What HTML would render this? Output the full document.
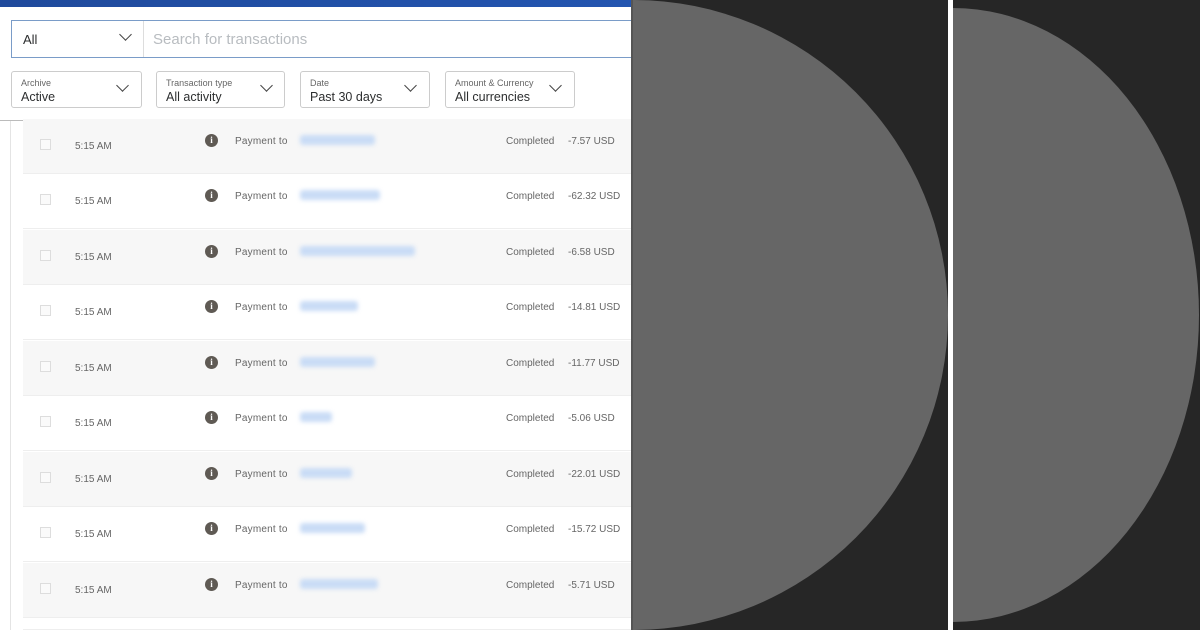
<!DOCTYPE html>
<html><head><style>
*{margin:0;padding:0;box-sizing:border-box}
body{width:1200px;height:630px;overflow:hidden;background:#262626;font-family:"Liberation Sans",sans-serif;position:relative}
#left{position:absolute;left:0;top:0;width:631px;height:630px;background:#fff;overflow:hidden}
.bar{position:absolute;left:0;top:0;width:631px;height:7px;background:linear-gradient(90deg,#1f4a9c,#2355b0)}
.search{position:absolute;left:11px;top:20px;width:630px;height:38px;border:1px solid #7a9cc8;background:#fff}
.search .all{position:absolute;left:11px;top:11px;font-size:13px;color:#2c2e2f}
.search .sep{position:absolute;left:131px;top:0;width:1px;height:36px;background:#ddd}
.search .ph{position:absolute;left:141px;top:10px;font-size:15px;color:#b8bcc0}
.chev{position:absolute;width:9px;height:9px;border-right:1.5px solid #444;border-bottom:1.5px solid #444;transform:rotate(45deg)}
.f{position:absolute;top:71px;height:37px;border:1px solid #ccc;border-radius:3px;background:#fff}
.f .l{position:absolute;left:9px;top:6px;font-size:9px;color:#666}
.f .v{position:absolute;left:9px;top:18px;font-size:12.5px;color:#2c2e2f}
.hr{position:absolute;left:0;top:120px;width:631px;height:1px;background:#bbb}
.gut{position:absolute;left:10px;top:121px;width:1px;height:510px;background:#e4e4e4}
.row{position:absolute;left:23px;width:608px;height:55px;border-bottom:1px solid #eee}
.row.g{background:#f7f7f7}
.cb{position:absolute;left:17px;top:20px;width:11px;height:11px;border:1px solid #ddd;background:#fafafa}
.t{position:absolute;left:52px;top:22px;font-size:10px;color:#666}
.i{position:absolute;left:182px;top:15px;width:13px;height:13px;border-radius:50%;background:#5f5a54;color:#fff;font-size:9px;font-weight:bold;text-align:center;line-height:13px;font-family:"Liberation Serif",serif}
.p{position:absolute;left:212px;top:17px;font-size:10px;color:#666;letter-spacing:.2px}
.n{position:absolute;left:277px;top:16px;height:10px;background:#c9dcf6;filter:blur(2px);border-radius:3px}
.s{position:absolute;left:483px;top:17px;font-size:10px;color:#666}
.a{position:absolute;left:545px;top:17px;font-size:10px;color:#666}
.pan{position:absolute;top:0;height:630px;overflow:hidden;background:#262626}
.e1{position:absolute;left:-315px;top:0;width:630px;height:630px;border-radius:50%;background:#666}
.e2{position:absolute;left:-246px;top:8px;width:492px;height:614px;border-radius:50%;background:#666}
.w{position:absolute;left:948px;top:0;width:5px;height:630px;background:#fff}
.strip{position:absolute;left:631px;top:0;width:2px;height:630px;background:#555}
</style></head><body>
<div class="pan" style="left:633px;width:315px"><div class="e1"></div></div>
<div class="w"></div>
<div class="pan" style="left:953px;width:247px"><div class="e2"></div></div>
<div class="strip"></div>
<div id="left">
<div class="bar"></div>
<div class="search"><span class="all">All</span><div class="chev" style="left:109px;top:9px"></div><div class="sep"></div><span class="ph">Search for transactions</span></div>
<div class="f" style="left:11px;width:131px"><span class="l">Archive</span><span class="v">Active</span><div class="chev" style="left:106px;top:9px"></div></div>
<div class="f" style="left:156px;width:129px"><span class="l">Transaction type</span><span class="v">All activity</span><div class="chev" style="left:105px;top:9px"></div></div>
<div class="f" style="left:300px;width:130px"><span class="l">Date</span><span class="v">Past 30 days</span><div class="chev" style="left:105px;top:9px"></div></div>
<div class="f" style="left:445px;width:130px"><span class="l">Amount &amp; Currency</span><span class="v">All currencies</span><div class="chev" style="left:105px;top:9px"></div></div>
<div class="hr"></div>
<div class="gut"></div>

<div class="row g" style="top:119px"><div class="cb"></div><span class="t">5:15 AM</span><span class="i">i</span><span class="p">Payment to</span><div class="n" style="width:75px"></div><span class="s">Completed</span><span class="a">-7.57 USD</span></div>
<div class="row" style="top:174px"><div class="cb"></div><span class="t">5:15 AM</span><span class="i">i</span><span class="p">Payment to</span><div class="n" style="width:80px"></div><span class="s">Completed</span><span class="a">-62.32 USD</span></div>
<div class="row g" style="top:230px"><div class="cb"></div><span class="t">5:15 AM</span><span class="i">i</span><span class="p">Payment to</span><div class="n" style="width:115px"></div><span class="s">Completed</span><span class="a">-6.58 USD</span></div>
<div class="row" style="top:285px"><div class="cb"></div><span class="t">5:15 AM</span><span class="i">i</span><span class="p">Payment to</span><div class="n" style="width:58px"></div><span class="s">Completed</span><span class="a">-14.81 USD</span></div>
<div class="row g" style="top:341px"><div class="cb"></div><span class="t">5:15 AM</span><span class="i">i</span><span class="p">Payment to</span><div class="n" style="width:75px"></div><span class="s">Completed</span><span class="a">-11.77 USD</span></div>
<div class="row" style="top:396px"><div class="cb"></div><span class="t">5:15 AM</span><span class="i">i</span><span class="p">Payment to</span><div class="n" style="width:32px"></div><span class="s">Completed</span><span class="a">-5.06 USD</span></div>
<div class="row g" style="top:452px"><div class="cb"></div><span class="t">5:15 AM</span><span class="i">i</span><span class="p">Payment to</span><div class="n" style="width:52px"></div><span class="s">Completed</span><span class="a">-22.01 USD</span></div>
<div class="row" style="top:507px"><div class="cb"></div><span class="t">5:15 AM</span><span class="i">i</span><span class="p">Payment to</span><div class="n" style="width:65px"></div><span class="s">Completed</span><span class="a">-15.72 USD</span></div>
<div class="row g" style="top:563px"><div class="cb"></div><span class="t">5:15 AM</span><span class="i">i</span><span class="p">Payment to</span><div class="n" style="width:78px"></div><span class="s">Completed</span><span class="a">-5.71 USD</span></div>
<div class="row" style="top:618px;height:12px"></div>
</div>
</body></html>
